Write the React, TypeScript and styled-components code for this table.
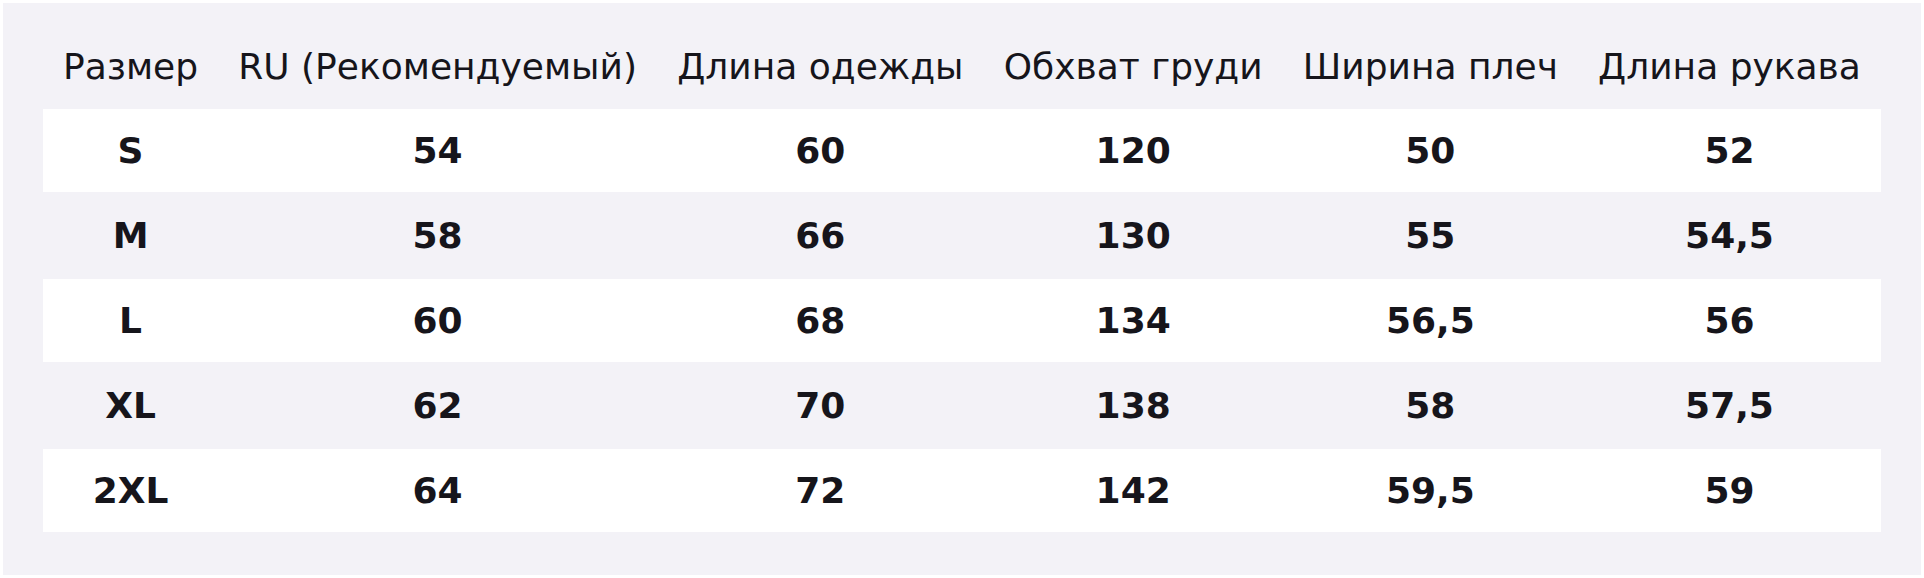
import * as React from 'react';
import styled, { createGlobalStyle } from 'styled-components';

const GlobalStyle = createGlobalStyle`
    html, body {
        margin: 0;
        padding: 0;
        background: #ffffff;
    }
    body {
        padding: 3px;
        font-family: 'DejaVu Sans', 'Liberation Sans', sans-serif;
        color: #16151b;
    }
`;

const Panel = styled.div`
    background: #f3f2f7;
    height: 572px;
    box-sizing: border-box;
    padding: 40px 40px;
`;

const Table = styled.table`
    width: 100%;
    border-collapse: collapse;
    border-spacing: 0;
`;

const HeadCell = styled.th`
    font-weight: 400;
    font-size: 36px;
    white-space: nowrap;
    text-align: center;
    padding: 3px 20px 22px;
`;

interface IRow {
    striped?: boolean;
}

const Row = styled.tr<IRow>`
    background: ${(props) => (props.striped ? '#ffffff' : 'transparent')};
    height: ${(props) => (props.striped ? '83px' : '87px')};
`;

const Cell = styled.td`
    font-weight: 700;
    font-size: 36px;
    text-align: center;
    padding: 0 20px;
    white-space: nowrap;
`;

const headers = [
    'Размер',
    'RU (Рекомендуемый)',
    'Длина одежды',
    'Обхват груди',
    'Ширина плеч',
    'Длина рукава',
];

const rows = [
    ['S', '54', '60', '120', '50', '52'],
    ['M', '58', '66', '130', '55', '54,5'],
    ['L', '60', '68', '134', '56,5', '56'],
    ['XL', '62', '70', '138', '58', '57,5'],
    ['2XL', '64', '72', '142', '59,5', '59'],
];

const App: React.FC = (): JSX.Element => {
    return (
        <>
            <GlobalStyle />
            <Panel>
                <Table>
                    <thead>
                        <tr>
                            {headers.map((title) => (
                                <HeadCell key={title}>{title}</HeadCell>
                            ))}
                        </tr>
                    </thead>
                    <tbody>
                        {rows.map((row, i) => (
                            <Row key={row[0]} striped={i % 2 === 0}>
                                {row.map((value, j) => (
                                    <Cell key={j}>{value}</Cell>
                                ))}
                            </Row>
                        ))}
                    </tbody>
                </Table>
            </Panel>
        </>
    );
};

export default App;
